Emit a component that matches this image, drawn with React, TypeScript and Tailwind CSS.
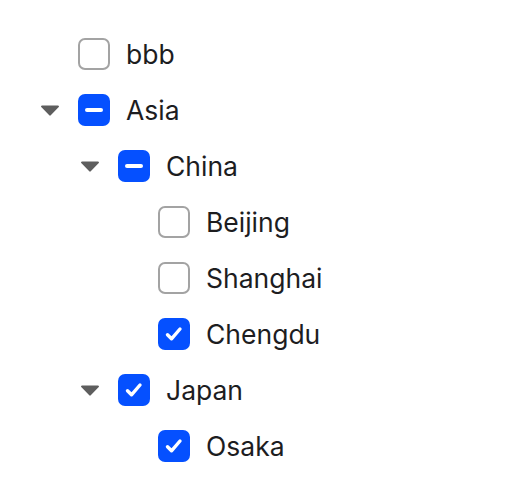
import React from 'react';

type State = 'checked' | 'unchecked' | 'indeterminate';

interface Node {
  label: string;
  state: State;
  children?: Node[];
}

const tree: Node[] = [
  { label: 'bbb', state: 'unchecked' },
  {
    label: 'Asia',
    state: 'indeterminate',
    children: [
      {
        label: 'China',
        state: 'indeterminate',
        children: [
          { label: 'Beijing', state: 'unchecked' },
          { label: 'Shanghai', state: 'unchecked' },
          { label: 'Chengdu', state: 'checked' },
        ],
      },
      {
        label: 'Japan',
        state: 'checked',
        children: [{ label: 'Osaka', state: 'checked' }],
      },
    ],
  },
];

function Checkbox({ state }: { state: State }) {
  if (state === 'unchecked') {
    return <span className="w-[32px] h-[32px] shrink-0 rounded-[7px] border-2 border-[#a3a3a3] bg-white" />;
  }
  return (
    <span className="w-[32px] h-[32px] shrink-0 rounded-[7px] bg-[#0550ff] flex items-center justify-center">
      {state === 'indeterminate' ? (
        <span className="w-[18px] h-[4px] rounded-full bg-white" />
      ) : (
        <svg width="32" height="32" viewBox="0 0 32 32" fill="none">
          <path d="M9.5 16.8l4 4 8.5-9.8" stroke="white" strokeWidth="3.4" strokeLinecap="round" strokeLinejoin="round" />
        </svg>
      )}
    </span>
  );
}

function Row({ node, level }: { node: Node; level: number }) {
  return (
    <>
      <div className="h-[56px] flex items-center" style={{ paddingLeft: 32 + level * 40 }}>
        <span className="w-[36px] h-full flex items-center justify-center">
          {node.children && (
            <svg width="18" height="11" viewBox="0 0 18 11">
              <path d="M1 0.5h16a1 1 0 0 1 .75 1.6l-8 8.2a1 1 0 0 1-1.5 0l-8-8.2A1 1 0 0 1 1 0.5z" fill="#5e5e5e" />
            </svg>
          )}
        </span>
        <span className="ml-[10px] flex items-center">
          <Checkbox state={node.state} />
        </span>
        <span className="ml-[16px] text-[26.5px] text-[#1d1d1f] leading-none pt-[1px]">{node.label}</span>
      </div>
      {node.children?.map((c) => <Row key={c.label} node={c} level={level + 1} />)}
    </>
  );
}

export default function App() {
  return (
    <div
      className="w-[516px] h-[500px] bg-white pt-[26px]"
      style={{ fontFamily: 'Inter, "Noto Sans", sans-serif' }}
    >
      {tree.map((n) => (
        <Row key={n.label} node={n} level={0} />
      ))}
    </div>
  );
}
